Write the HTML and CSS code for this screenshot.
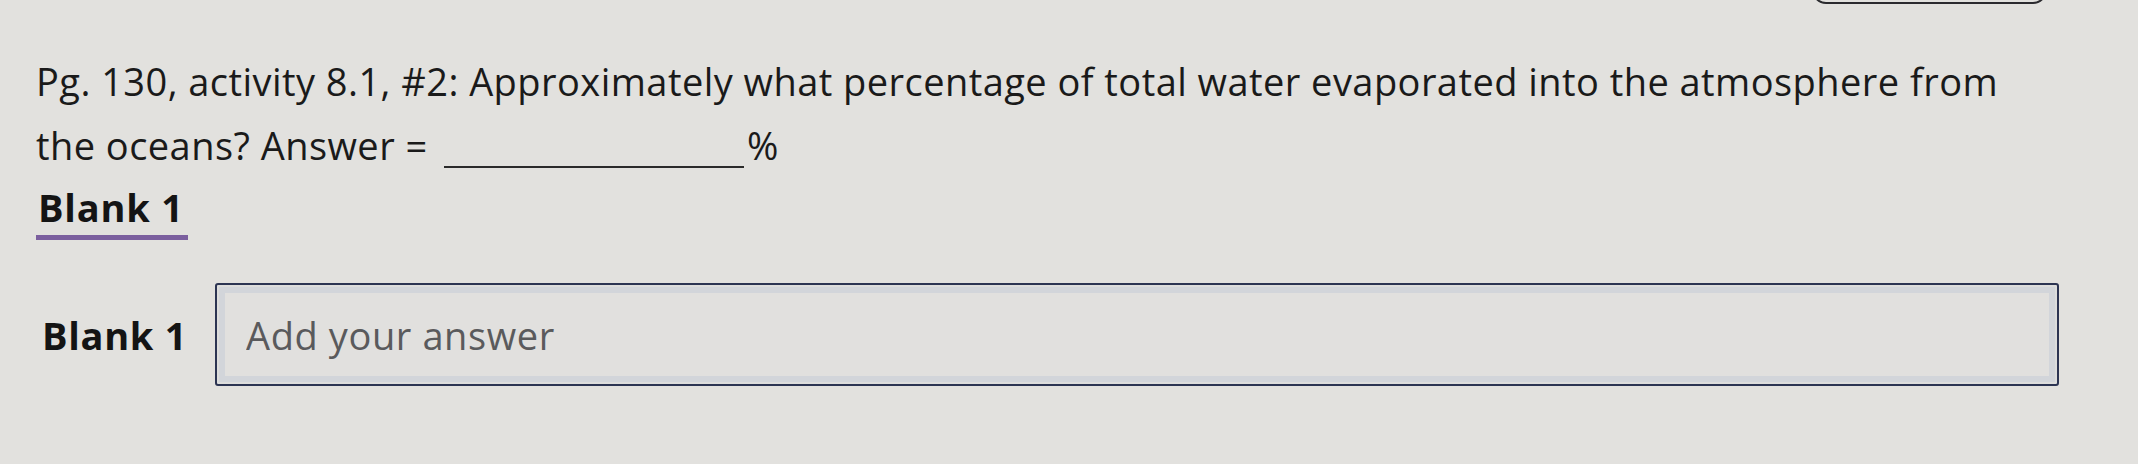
FILE: index.html
```html
<!DOCTYPE html>
<html lang="en">
<head>
<meta charset="utf-8">
<title>Question</title>
<link rel="stylesheet" href="styles.css">
</head>
<body>
<div class="topbar"><button class="top-btn" type="button" aria-label="Next"></button></div>
<main class="question">
  <p class="prompt">Pg. 130, activity 8.1, #2: Approximately what percentage of total water evaporated into the atmosphere from the oceans? Answer = <span class="blank-line"></span>%</p>
  <h2 class="blank-heading">Blank 1</h2>
  <div class="answer-row">
    <label class="answer-label" for="b1">Blank 1</label>
    <input class="answer-input" id="b1" type="text" placeholder="Add your answer">
  </div>
</main>
</body>
</html>
```
FILE: styles.css
```css
html, body {
  margin: 0;
  padding: 0;
}
body {
  width: 2138px;
  height: 464px;
  overflow: hidden;
  background: #e2e1de;
  color: #1a1a1a;
  font-family: "Open Sans", "Liberation Sans", sans-serif;
}
.topbar {
  display: flex;
  justify-content: flex-end;
  height: 0;
  padding-right: 91px;
}
.top-btn {
  margin-top: -46px;
  width: 235px;
  height: 50px;
  border: 2px solid #2a2a2e;
  border-radius: 14px;
  background: transparent;
}
.question {
  padding: 49px 0 0 36px;
}
.prompt {
  margin: 0;
  width: 2000px;
  font-size: 38px;
  line-height: 64px;
  letter-spacing: 0.45px;
}
.blank-line {
  display: inline-block;
  width: 300px;
  height: 0;
  border-bottom: 2px solid #2a2a2a;
  margin: 0 3px 0 6px;
  vertical-align: -8px;
}
.blank-heading {
  display: inline-block;
  margin: 8px 0 0 0;
  padding: 0 4px 6px 2px;
  font-size: 38px;
  font-weight: 700;
  line-height: 44px;
  letter-spacing: 0.8px;
  border-bottom: 5px solid #7b5f9e;
  color: #141414;
}
.answer-row {
  display: flex;
  align-items: center;
  margin-top: 43px;
}
.answer-label {
  box-sizing: border-box;
  width: 179px;
  padding-left: 6px;
  font-size: 38px;
  font-weight: 700;
  line-height: 44px;
  letter-spacing: 0.7px;
  color: #141414;
}
.answer-input {
  box-sizing: border-box;
  width: 1844px;
  height: 103px;
  margin: 0;
  padding: 0 0 0 29px;
  border: 2px solid #2c3452;
  border-radius: 3px;
  background: #e1e0de;
  box-shadow: inset 0 0 0 2px #dddddc, inset 0 0 0 8px #d2d5da;
  font-family: "Open Sans", "Liberation Sans", sans-serif;
  font-size: 38px;
  letter-spacing: 0.6px;
  color: #222;
  outline: none;
}
.answer-input::placeholder {
  color: #5a5a5c;
  opacity: 1;
}
```
